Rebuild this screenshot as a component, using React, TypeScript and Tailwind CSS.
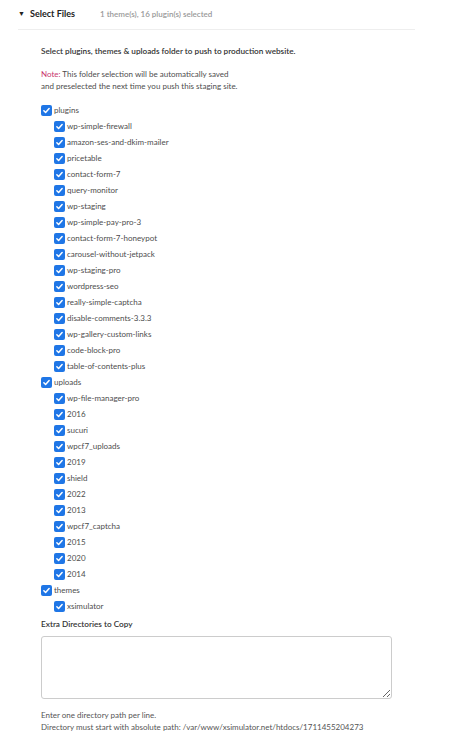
import React from "react";

const plugins = [
  "wp-simple-firewall",
  "amazon-ses-and-dkim-mailer",
  "pricetable",
  "contact-form-7",
  "query-monitor",
  "wp-staging",
  "wp-simple-pay-pro-3",
  "contact-form-7-honeypot",
  "carousel-without-jetpack",
  "wp-staging-pro",
  "wordpress-seo",
  "really-simple-captcha",
  "disable-comments-3.3.3",
  "wp-gallery-custom-links",
  "code-block-pro",
  "table-of-contents-plus",
];

const uploads = [
  "wp-file-manager-pro",
  "2016",
  "sucuri",
  "wpcf7_uploads",
  "2019",
  "shield",
  "2022",
  "2013",
  "wpcf7_captcha",
  "2015",
  "2020",
  "2014",
];

const themes = ["xsimulator"];

function Check() {
  return (
    <span className="flex h-[11px] w-[11px] shrink-0 items-center justify-center rounded-[2px] bg-[#1f76e6]">
      <svg viewBox="0 0 12 12" className="h-[9px] w-[9px]" fill="none" stroke="white" strokeWidth={2} strokeLinecap="round" strokeLinejoin="round">
        <path d="M2.5 6.3l2.3 2.3 4.7-5.2" />
      </svg>
    </span>
  );
}

function Row({ label, nested }: { label: string; nested?: boolean }) {
  return (
    <div className={`flex h-4 items-center gap-[2px] ${nested ? "pl-[13px]" : ""}`}>
      <Check />
      <span className="text-[#4d4d4d]">{label}</span>
    </div>
  );
}

function Group({ name, items }: { name: string; items: string[] }) {
  return (
    <div>
      <Row label={name} />
      {items.map((item) => (
        <Row key={item} label={item} nested />
      ))}
    </div>
  );
}

export default function App() {
  return (
    <div className="min-h-screen bg-white font-['Lato',sans-serif] text-[8px] text-[#333]">
      {/* Header */}
      <div className="mx-[18px] flex h-[30px] w-[397px] items-center border-b border-[#eee] pb-[2px]">
        <span className="w-[12px] text-[7px] text-[#222]">▼</span>
        <span className="w-[70px] text-[9px] font-bold text-[#222]">Select Files</span>
        <span className="text-[8px] font-semibold text-[#999]">1 theme(s), 16 plugin(s) selected</span>
      </div>

      <div className="pl-[41px]">
        <p className="pt-[15px] text-[8.2px] font-semibold leading-[12px]">
          Select plugins, themes &amp; uploads folder to push to production website.
        </p>
        <p className="pt-[11px] leading-[12px] text-[#4d4d4d]">
          <span className="text-[#c9356e]">Note:</span> This folder selection will be automatically saved
          <br />
          and preselected the next time you push this staging site.
        </p>

        <div className="pt-[10px]">
          <Group name="plugins" items={plugins} />
          <Group name="uploads" items={uploads} />
          <Group name="themes" items={themes} />
        </div>

        <p className="pt-[4px] text-[8.2px] font-semibold leading-[12px]">Extra Directories to Copy</p>
        <textarea className="mt-[6px] block h-[63px] w-[351px] rounded-[3px] border border-[#ccc] bg-white" />

        <p className="pt-[10px] leading-[12px] text-[#555]">
          Enter one directory path per line.
          <br />
          Directory must start with absolute path: /var/www/xsimulator.net/htdocs/1711455204273
        </p>
      </div>
    </div>
  );
}
